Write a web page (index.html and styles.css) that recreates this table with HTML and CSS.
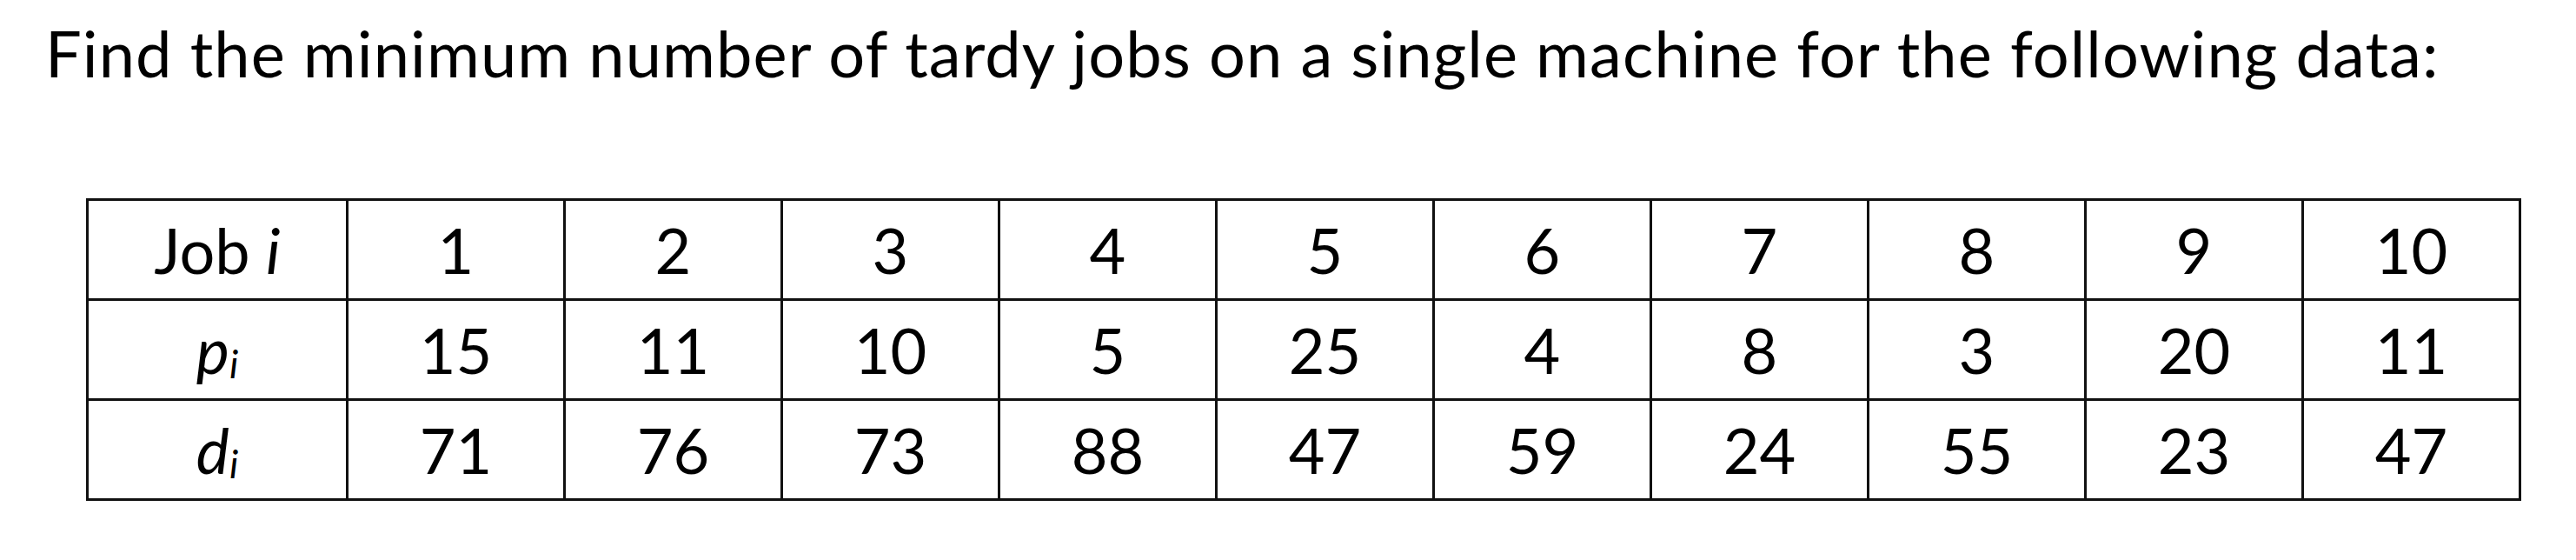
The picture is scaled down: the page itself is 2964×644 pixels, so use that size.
FILE: index.html
```html
<!DOCTYPE html>
<html>
<head>
<meta charset="utf-8">
<link rel="stylesheet" href="styles.css">
</head>
<body>
<div class="page">
  <h1 class="title">Find the minimum number of tardy jobs on a single machine for the following data:</h1>
  <div class="table-wrap">
    <table class="data">
      <tr>
        <td class="head">Job <i>i</i></td>
        <td>1</td><td>2</td><td>3</td><td>4</td><td>5</td><td>6</td><td>7</td><td>8</td><td>9</td><td>10</td>
      </tr>
      <tr>
        <td class="head"><i>p</i><sub><i>i</i></sub></td>
        <td>15</td><td>11</td><td>10</td><td>5</td><td>25</td><td>4</td><td>8</td><td>3</td><td>20</td><td>11</td>
      </tr>
      <tr>
        <td class="head"><i>d</i><sub><i>i</i></sub></td>
        <td>71</td><td>76</td><td>73</td><td>88</td><td>47</td><td>59</td><td>24</td><td>55</td><td>23</td><td>47</td>
      </tr>
    </table>
  </div>
</div>
</body>
</html>
```
FILE: styles.css
```css
html, body {
  margin: 0;
  padding: 0;
  background: #ffffff;
}

.page {
  font-family: Lato, "Open Sans", sans-serif;
  color: #000;
  padding-top: 24px;
}

.title {
  margin: 0 0 130px 0;
  padding-left: 52px;
  font-size: 74px;
  font-weight: 400;
  line-height: 74px;
  letter-spacing: 1.1px;
  white-space: nowrap;
}

.table-wrap {
  padding-left: 99px;
}

.data {
  border-collapse: separate;
  border-spacing: 0;
  table-layout: fixed;
  box-sizing: border-box;
  width: 2802px;
  border-left: 3px solid #111;
  border-top: 3px solid #111;
}

.data td {
  box-sizing: border-box;
  width: 250px;
  height: 115px;
  padding: 0;
  border-right: 3px solid #111;
  border-bottom: 3px solid #111;
  text-align: center;
  vertical-align: middle;
  font-size: 72px;
  line-height: 1.2;
}

.data td.head {
  width: 299px;
}

.data sub {
  font-size: 0.62em;
  vertical-align: -0.12em;
  line-height: 0;
}
```
